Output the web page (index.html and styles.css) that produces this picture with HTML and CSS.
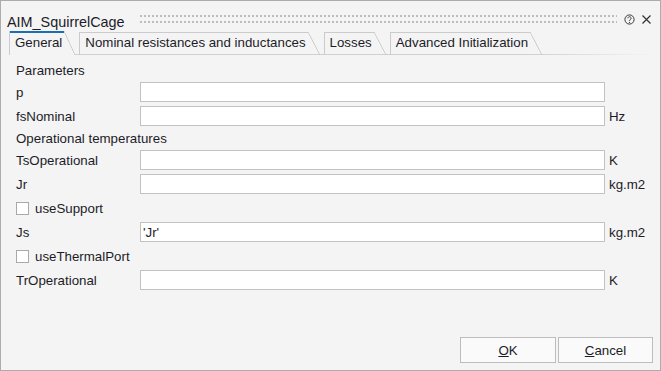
FILE: index.html
```html
<!DOCTYPE html>
<html>
<head>
<meta charset="utf-8">
<link rel="stylesheet" href="styles.css">
</head>
<body>
<div class="window">
  <div class="titlebar">
    <span class="title">AIM_SquirrelCage</span>
    <span class="grip"></span>
    <svg class="help" width="11" height="11" viewBox="0 0 11 11"><circle cx="5.5" cy="5.5" r="4.6" fill="none" stroke="#3a3a3a" stroke-width="1"/><path d="M3.9 4.3 A1.6 1.6 0 1 1 6.4 5.6 C5.8 6 5.5 6.2 5.5 6.9" fill="none" stroke="#3a3a3a" stroke-width="1"/><circle cx="5.5" cy="8.3" r="0.65" fill="#3a3a3a"/></svg>
    <svg class="close" width="9" height="9" viewBox="0 0 9 9"><path d="M0.5 0.5 L8.5 8.5 M8.5 0.5 L0.5 8.5" stroke="#333" stroke-width="1.2"/></svg>
  </div>
  <div class="tabs">
    <div class="tab active">General</div>
    <div class="tab">Nominal resistances and inductances</div>
    <div class="tab">Losses</div>
    <div class="tab">Advanced Initialization</div>
  </div>
  <div class="form">
    <div class="section">Parameters</div>
    <div class="lbl">p</div><div class="field"></div><div class="unit"></div>
    <div class="lbl">fsNominal</div><div class="field"></div><div class="unit">Hz</div>
    <div class="section">Operational temperatures</div>
    <div class="lbl">TsOperational</div><div class="field"></div><div class="unit">K</div>
    <div class="lbl">Jr</div><div class="field"></div><div class="unit">kg.m2</div>
    <div class="check"><span class="box"></span><span class="ctext">useSupport</span></div>
    <div class="lbl">Js</div><div class="field">'Jr'</div><div class="unit">kg.m2</div>
    <div class="check"><span class="box"></span><span class="ctext">useThermalPort</span></div>
    <div class="lbl">TrOperational</div><div class="field"></div><div class="unit">K</div>
  </div>
  <div class="footer">
    <button class="btn ok"><u>O</u>K</button>
    <button class="btn cancel"><u>C</u>ancel</button>
  </div>
</div>
</body>
</html>
```
FILE: styles.css
```css
html, body {
  margin: 0;
  padding: 0;
}
body {
  font-family: "Liberation Sans", Arial, sans-serif;
  font-size: 13.3px;
  color: #1c1c28;
}
.window {
  width: 661px;
  height: 371px;
  box-sizing: border-box;
  border: 1px solid #acacac;
  background: #f4f4f4;
  display: flex;
  flex-direction: column;
}
.titlebar {
  display: flex;
  align-items: flex-start;
  height: 30px;
  padding: 0 9px 0 6px;
  flex-shrink: 0;
}
.title {
  font-size: 14.4px;
  line-height: 16px;
  padding-top: 13px;
}
.grip {
  flex: 1;
  height: 8px;
  margin: 14px 7px 0 15px;
  background:
    linear-gradient(to right, #bdbdbd 2px, transparent 2px) 0 0 / 4px 2px repeat-x,
    linear-gradient(to right, #bdbdbd 2px, transparent 2px) 0 6px / 4px 2px repeat-x;
}
.help {
  margin-top: 13px;
  display: block;
}
.close {
  margin: 14px 0 0 7px;
  display: block;
}
.tabs {
  display: flex;
  gap: 4px;
  height: 24px;
  padding-left: 8px;
  flex-shrink: 0;
  background: linear-gradient(to right, #d0d0d0 0, #d0d0d0 80%, rgba(208,208,208,0) 99%) 8px 100% / calc(100% - 8px) 1px no-repeat;
}
.tab {
  position: relative;
  height: 23px;
  margin-top: 1px;
  box-sizing: border-box;
  border-left: 1px solid #cbcbcb;
  padding: 0 14px 0 5px;
  line-height: 22px;
  white-space: nowrap;
}
.tab::before {
  content: "";
  position: absolute;
  left: -1px;
  right: 12px;
  top: 0;
  height: 1px;
  background: #cbcbcb;
}
.tab::after {
  content: "";
  position: absolute;
  top: 0;
  right: 0;
  width: 12px;
  height: 100%;
  background: linear-gradient(to top right, transparent calc(50% - 0.7px), #c4c4c4 50%, transparent calc(50% + 0.7px));
}
.tab.active {
  height: 24px;
  margin-top: 0;
  padding: 2px 13px 0 5px;
  line-height: 20px;
  background: #f4f4f4;
}
.tab.active::before {
  height: 2px;
  left: 0;
  right: 11px;
  background: #1a6fae;
}
.tab.active::after {
  width: 11px;
}
.form {
  display: grid;
  grid-template-columns: 124px 1fr 47px;
  row-gap: 4px;
  padding: 7px 8px 0 15px;
}
.section {
  grid-column: 1 / -1;
  height: 16px;
  line-height: 18px;
}
.lbl {
  height: 20px;
  line-height: 22px;
}
.field {
  height: 20px;
  box-sizing: border-box;
  border: 1px solid #c2c2c2;
  background: #fff;
  padding-left: 2px;
  line-height: 19px;
}
.unit {
  padding-left: 4px;
  height: 20px;
  line-height: 22px;
}
.check {
  grid-column: 1 / -1;
  display: flex;
  align-items: center;
  height: 20px;
}
.ctext {
  line-height: 20px;
  padding-top: 1px;
}
.box {
  width: 13px;
  height: 13px;
  box-sizing: border-box;
  border: 1px solid #a9a9a9;
  background: #fff;
  margin-right: 6px;
}
.footer {
  margin-top: auto;
  display: flex;
  justify-content: flex-end;
  gap: 2px;
  padding: 0 7px 7px 0;
}
.btn {
  height: 26px;
  box-sizing: border-box;
  border: 1px solid #bdbdbd;
  background: #fafafa;
  font-family: "Liberation Sans", Arial, sans-serif;
  font-size: 13.3px;
  color: #1c1c28;
  padding: 0;
}
.btn.ok { width: 96px; }
.btn.cancel { width: 95px; }
```
